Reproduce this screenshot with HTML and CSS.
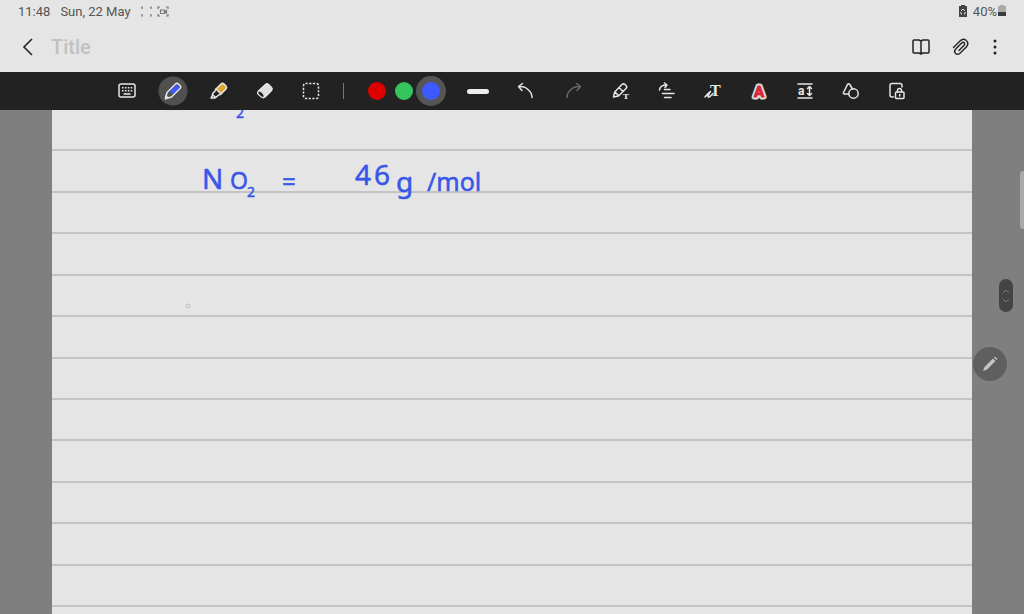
FILE: index.html
```html
<!DOCTYPE html>
<html lang="en">
<head>
<meta charset="utf-8">
<meta name="viewport" content="width=device-width, initial-scale=1">
<title>Notes</title>
<link rel="stylesheet" href="styles.css">
</head>
<body>
<div class="status">
  <span>11:48</span>
  <span class="date">Sun, 22 May</span>
  <svg class="capture" width="28" height="12" viewBox="0 0 28 12" fill="none" stroke="#777" stroke-width="1.200"><path d="M1 4V2h1M9 2h1v2M10 9v2H9M2 11H1V9M17 4V2h2M25 2h2v2M27 9v2h-2M19 11h-2V9"/><path d="M19.500 5h4v3.500h-4zM23.500 6.500l2-1v2.500z"/></svg>
  <svg class="saver" width="8" height="12" viewBox="0 0 8 12"><path d="M2 0h4v1h2v11H0V1h2z" fill="#444"/><path d="M2 6l2-2 2 2M2 7v2h1M6 7v2H5" fill="none" stroke="#ddd"/></svg>
  <span class="percent">40%</span>
  <svg width="8" height="12" viewBox="0 0 8 12"><path d="M2 0h4v1h2v6H0V1h2z" fill="#aaa"/><path d="M0 7h8v4H0z" fill="#3c3c3c"/></svg>
</div>
<header class="titlebar">
  <button class="icon-button" aria-label="Back"><svg width="12" height="18" viewBox="0 0 12 18" fill="none" stroke="#222" stroke-width="1.600"><path d="M10 1L2 9l8 8"/></svg></button>
  <input class="title" type="text" placeholder="Title" aria-label="Title">
  <button class="icon-button" aria-label="Reading mode"><svg width="20" height="20" viewBox="0 0 20 20" fill="none" stroke="#222" stroke-width="1.500" stroke-linejoin="round"><path d="M10 4L8 3H3Q2 3 2 4v11q0 1 1 1h5l2 1 2-1h5q1 0 1-1V4q0-1-1-1h-5zV17"/></svg></button>
  <button class="icon-button" aria-label="Attach"><svg width="20" height="20" viewBox="0 0 20 20" fill="none" stroke="#222" stroke-width="1.400" stroke-linecap="round"><path d="M2.500 10.500L9 4Q12 1 15 3.200q3.500 3 .5 6.500L9 16.200q-2.500 2-4.500.2-2-2.200.2-4.500l6-6q1.500-1.300 2.600-.2 1.200 1.300-.2 2.600L8 13.400"/></svg></button>
  <button class="icon-button more" aria-label="More options"><svg width="4" height="16" viewBox="0 0 4 16" fill="#222"><circle cx="2" cy="2" r="1.500"/><circle cx="2" cy="8" r="1.500"/><circle cx="2" cy="14" r="1.500"/></svg></button>
</header>
<nav class="toolbar" aria-label="Drawing tools">
  <button class="tool" aria-label="Keyboard"><svg class="glyph" viewBox="0 0 20 20"><rect x="2" y="3" width="16" height="13" rx="2"/><path d="M5 6.800h10.400M5 9.800h10.400" stroke-width="1.600" stroke-dasharray="1.600 1.300" stroke-linecap="butt"/><path d="M7 13h6"/></svg></button>
  <button class="tool active" aria-label="Pen"><svg class="glyph" viewBox="0 0 20 20"><path d="M2.500 17.500l1.500-6L12.500 3q1.500-1.300 3 0l1.500 1.500q1.500 1.500 0 3L8.500 16z"/><path d="M7.500 10l6-6 2.700 2.700-6 6z" fill="#3d5afe" stroke="#3d5afe" stroke-width="1"/><path d="M3 15l2 2-2.500.7z" fill="#e6e6e6"/></svg></button>
  <button class="tool" aria-label="Highlighter"><svg class="glyph" viewBox="0 0 20 20"><path d="M7 8l5-5q1.500-1.300 3 0l2 2q1.300 1.500 0 3l-5 5z" fill="#e0a730"/><path d="M7 8q-1 3-3 4-1 1-.5 2.500L2 17h4l1-.8q2-2.200 5-3.200M4 14l2.500 2.500"/></svg></button>
  <button class="tool" aria-label="Eraser"><svg class="glyph" viewBox="0 0 20 20"><path d="M3.500 10l7-6.500q1.500-1.300 3 0l3 3q1.300 1.500 0 3L10 16q-1.800 1.300-3.500 0l-3-2.500q-1.500-1.700 0-3.500z" fill="#dedede"/><path d="M3.800 10.500q4 .8 5 5-1.200.7-2.200 0l-2.800-2.500q-1-1.200 0-2.500z" fill="#222" stroke="none"/></svg></button>
  <button class="tool" aria-label="Select area"><svg class="glyph" viewBox="0 0 20 20"><rect x="2.500" y="2.500" width="15" height="15" rx="2" stroke-dasharray="2.200 1.500" stroke-linecap="butt"/></svg></button>
  <span class="divider"></span>
  <div class="swatches" role="radiogroup" aria-label="Pen colour">
    <label class="swatch"><input class="dot red" type="radio" name="colour" aria-label="Red"></label>
    <label class="swatch"><input class="dot green" type="radio" name="colour" aria-label="Green"></label>
    <label class="swatch"><input class="dot blue" type="radio" name="colour" aria-label="Blue" checked></label>
  </div>
  <button class="tool wide" aria-label="Line thickness"><span class="thickness"></span></button>
  <button class="tool wide" aria-label="Undo"><svg class="glyph" viewBox="0 0 20 20"><path d="M6.500 2.500L2.500 5.500l3.500 4M3 5.500q6-.5 9.500 3.500 3.500 3 3.500 7.500"/></svg></button>
  <button class="tool wide" aria-label="Redo" disabled><svg class="glyph faded" viewBox="0 0 20 20"><path d="M12.500 2.500l4 3-3.500 4M16 5.500q-6-.5-9.500 3.500Q3 12 3 16.500"/></svg></button>
  <button class="tool" aria-label="Pen to text"><svg class="glyph" viewBox="0 0 20 20"><path d="M2.500 16l1.200-5L11 3.500q1.500-1.300 3 0l1 1q1.500 1.500 0 3L7.500 15zM8 6.500l4 4M4 11l3.500 3.500"/><text class="mark tiny" x="12" y="18">T</text></svg></button>
  <button class="tool" aria-label="Straighten"><svg class="glyph" viewBox="0 0 20 20"><path d="M2.500 9q.5-5 7-5M7.500 2l2.500 2-2 2.500M7.500 8.500H13M5.500 12.500H17M7.500 16.500H14"/></svg></button>
  <button class="tool" aria-label="Text style"><svg class="glyph" viewBox="0 0 20 20"><path d="M2 16q6-6.500 5.500-5.500L5 15q-.5 2 2 .5l3-3"/><text class="mark script" x="7" y="15">T</text></svg></button>
  <button class="tool" aria-label="Text colour"><svg class="glyph" viewBox="0 0 20 20"><text class="mark outline" x="10" y="16">A</text><text class="mark colour" x="10" y="16">A</text></svg></button>
  <button class="tool" aria-label="Align text"><svg class="glyph" viewBox="0 0 20 20"><path d="M3 3h14M3 17h14M14.500 6v8M12.500 7.500l2-2 2 2M12.500 12.500l2 2 2-2"/><text class="mark small" x="3" y="14">a</text></svg></button>
  <button class="tool" aria-label="Shapes"><svg class="glyph" viewBox="0 0 20 20"><path d="M7.500 13H3.500q-1.500 0-1-1.500L6.500 3.500q1-1.500 2.300 0L11.500 8"/><circle cx="12.500" cy="12.500" r="4.700"/></svg></button>
  <button class="tool" aria-label="Lock canvas"><svg class="glyph" viewBox="0 0 20 20"><path d="M6.500 16H5q-2 0-2-2V4.500q0-2 2-2h8q2 0 2 2V6M10.500 11V9.500q0-2 2-2t2 2V11"/><rect x="8.500" y="11" width="8.500" height="6.500" rx="1"/><path d="M12.700 13.500v1.500"/></svg></button>
</nav>
<main class="workspace">
  <section class="paper" aria-label="Note page">
    <svg class="ink" width="920" height="504" viewBox="0 0 920 504">
      <text class="hand sub" x="184" y="8">2</text>
      <text class="hand" x="150" y="79">N</text>
      <text class="hand letter" x="178" y="79">O</text>
      <text class="hand sub" x="195" y="87">2</text>
      <text class="hand equals" x="230" y="80">=</text>
      <text class="hand" x="303" y="75">4</text>
      <text class="hand" x="322" y="75">6</text>
      <text class="hand" x="344" y="82">g</text>
      <text class="hand unit" x="375" y="81">/mol</text>
      <circle cx="136" cy="196" r="2" fill="none" stroke="#b4bfbd"/>
    </svg>
    <div class="rules"><i></i><i></i><i></i><i></i><i></i><i></i><i></i><i></i><i></i><i></i><i></i><i></i></div>
  </section>
  <span class="scrollbar"></span>
  <button class="page-handle" aria-label="Change page"><svg width="8" height="20" viewBox="0 0 8 20" fill="none" stroke="#777"><path d="M1 7l3-3 3 3M1 13l3 3 3-3"/></svg></button>
  <button class="edit" aria-label="Edit"><svg width="18" height="18" viewBox="0 0 18 18" fill="#c4c4c4"><path d="M2 16l1.500-4L12 3.500 14.500 6 6 14.500zM13 2.500l1-1 2.500 2.500-1 1z"/></svg></button>
</main>
</body>
</html>
```
FILE: styles.css
```css
* { box-sizing: border-box; }
body {
  margin: 0;
  min-height: 100vh;
  display: flex;
  flex-direction: column;
  background: #e5e5e5;
  color: #555;
  font-family: Roboto, "Liberation Sans", sans-serif;
}
button { border: 0; padding: 0; background: none; display: grid; place-items: center; }
svg { display: block; }
.status {
  display: flex;
  align-items: center;
  height: 22px;
  padding: 0 18px;
  font-size: 13px;
}
.date { margin-left: 10px; }
.capture { margin-left: 10px; }
.saver { margin-left: auto; }
.percent { margin: 0 1px 0 6px; }
.titlebar {
  display: flex;
  align-items: center;
  height: 50px;
  padding: 0 13px 0 12px;
}
.icon-button { width: 32px; height: 32px; }
.title {
  flex: 1;
  min-width: 0;
  margin: 0 8px 0 7px;
  padding: 0;
  border: 0;
  outline: 0;
  background: none;
  font: 500 20px Roboto, sans-serif;
  color: #333;
}
.title::placeholder { color: #c1c1c1; opacity: 1; }
.titlebar .icon-button + .icon-button { margin-left: 8px; }
.titlebar .icon-button + .more { margin-left: 2px; }
.toolbar {
  display: flex;
  align-items: center;
  justify-content: center;
  height: 38px;
  background: #222;
}
.tool { width: 46px; height: 38px; position: relative; }
.wide { width: 48px; }
.active { background: radial-gradient(circle, #505050 14px, transparent 15px); }
.glyph {
  width: 20px;
  height: 20px;
  fill: none;
  stroke: #e6e6e6;
  stroke-width: 1.5;
  stroke-linecap: round;
  stroke-linejoin: round;
}
.faded { stroke: #6a6a6a; }
.mark { fill: #e6e6e6; stroke: none; font: bold 8px "DejaVu Serif", serif; }
.script { font: bold 16px "Liberation Serif", serif; }
.small { font: bold 12px Roboto, sans-serif; }
.outline,
.colour {
  font: bold 15px Roboto, sans-serif;
  text-anchor: middle;
}
.outline { stroke: #ddd; stroke-width: 5; }
.colour { fill: #d72638; stroke: #d72638; stroke-width: 1; }
.divider { width: 1px; height: 16px; margin: 0 19px 0 9px; background: #777; }
.swatches { display: flex; margin-right: 10px; }
.swatch { width: 27px; display: grid; place-items: center; }
.dot { appearance: none; width: 18px; height: 18px; margin: 0; border-radius: 50%; }
.dot:checked { box-shadow: 0 0 0 6px #555; }
.red { background: #dc0000; }
.green { background: #36c45d; }
.blue { background: #3d5afe; }
.thickness { width: 22px; height: 5px; border-radius: 3px; background: #eee; }
.workspace {
  flex: 1;
  position: relative;
  display: flex;
  padding: 0 52px;
  background: #7f7f7f;
}
.paper { flex: 1; position: relative; background: #e5e5e5; }
.rules {
  height: 100%;
  padding-bottom: 7px;
  display: grid;
  grid-template-rows: repeat(12, 1fr);
}
.rules i { border-bottom: 2px solid #c4c4c4; }
.ink { position: absolute; top: 0; left: 0; }
.hand { font: 28px "Noto Sans", sans-serif; fill: #3856e8; stroke: #3856e8; stroke-width: 0.5; }
.letter { font-size: 23px; }
.sub { font-size: 14px; }
.equals { font-size: 24px; }
.unit { font-size: 25px; }
.scrollbar {
  position: absolute;
  right: 0;
  top: 61px;
  width: 4px;
  height: 58px;
  border-radius: 3px 0 0 3px;
  background: #aaa;
}
.page-handle {
  position: absolute;
  right: 11px;
  top: 169px;
  width: 14px;
  height: 33px;
  border-radius: 7px;
  background: #444;
}
.edit {
  position: absolute;
  right: 17px;
  top: 237px;
  width: 34px;
  height: 34px;
  border-radius: 50%;
  background: #5f5f5f;
}
```
